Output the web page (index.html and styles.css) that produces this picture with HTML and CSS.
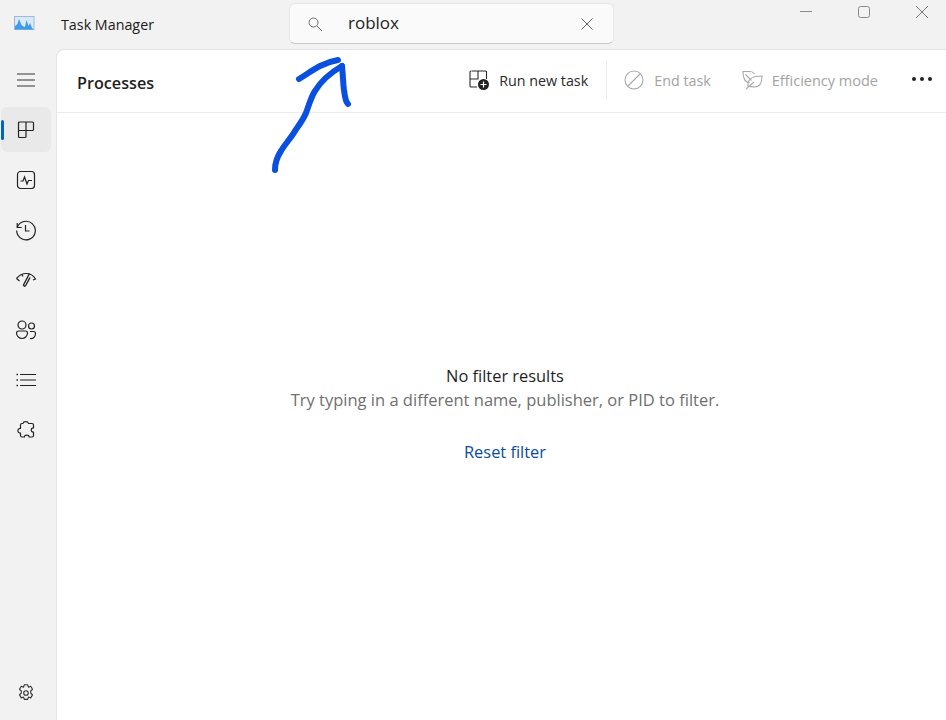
FILE: index.html
```html
<!DOCTYPE html>
<html lang="en">
<head>
<meta charset="utf-8">
<title>Task Manager</title>
<link rel="stylesheet" href="styles.css">
</head>
<body>
<div class="window">
  <header class="titlebar">
    <div class="brand">
      <svg class="app-icon" width="21" height="15" viewBox="0 0 21 15"><rect x=".5" y=".5" width="19.500" height="13" fill="#dbe9f6" stroke="#9cbcdc"/><path d="M1 13.500V10l2.500-2L5 3l2.500 6 2 1.500L11 11l1.500-7 2 6 1.500-3 2 5 2 1.500z" fill="#3f9be8"/></svg>
      <span class="app-name">Task Manager</span>
    </div>
    <div class="search">
      <svg class="search-icon" width="16" height="16" viewBox="0 0 16 16" fill="none" stroke="#6d6d6d" stroke-width="1"><circle cx="6.500" cy="6.500" r="4.500"/><path d="M10 10l5 5"/></svg>
      <span class="search-text">roblox</span>
      <svg class="search-clear" width="14" height="14" viewBox="0 0 14 14" fill="none" stroke="#5f5f5f" stroke-width="1"><path d="M1.500 1.500l11 11M12.500 1.500l-11 11"/></svg>
    </div>
    <div class="win-controls">
      <svg width="12" height="2" viewBox="0 0 12 2"><path d="M0 .5h12" stroke="#8a8a8a"/></svg>
      <svg width="12" height="12" viewBox="0 0 12 12" fill="none"><rect x=".5" y=".5" width="11" height="11" rx="2" stroke="#8a8a8a"/></svg>
      <svg width="12" height="12" viewBox="0 0 12 12" fill="none" stroke="#7a7a7a"><path d="M0 0l12 12M12 0L0 12"/></svg>
    </div>
  </header>
  <div class="body">
    <nav class="sidebar">
      <div class="nav-top">
        <a class="nav-item nav-menu"><svg width="18" height="14" viewBox="0 0 18 14" stroke="#333" stroke-width="1.100"><path d="M0 1h18M0 7h18M0 13h18"/></svg></a>
        <a class="nav-item active"><svg width="20" height="20" viewBox="0 0 20 20" fill="none" stroke="#222" stroke-width="1.200"><path d="M3.500 2h13a1 1 0 0 1 1 1v6.500a1 1 0 0 1-1 1H10v6a1 1 0 0 1-1 1H3.500a1 1 0 0 1-1-1V3a1 1 0 0 1 1-1zM10 2v8.500H2.500"/></svg></a>
        <a class="nav-item"><svg width="20" height="20" viewBox="0 0 20 20" fill="none" stroke="#222" stroke-width="1.200"><rect x="1.500" y="1.500" width="17" height="17" rx="3"/><path d="M4.500 11H7l1.500-4 2.500 7 1.500-3.500H16"/></svg></a>
        <a class="nav-item"><svg width="22" height="22" viewBox="0 0 22 22" fill="none" stroke="#222" stroke-width="1.200"><path d="M2.200 4v4.500h4.500"/><path d="M2.300 8.300A9.300 9.300 0 1 1 1.700 11.500"/><path d="M10.500 6v6h4"/></svg></a>
        <a class="nav-item"><svg width="22" height="16" viewBox="0 0 22 16" fill="none" stroke="#222" stroke-width="1.200"><path d="M1.500 6.500C4 3.500 7.500 1.500 11 1.500c4 0 7.500 2 9.500 5.500l-2.500 1"/><path d="M1.500 6.500l3 2.500M7 2.500l1 2"/><path d="M14.500 1.500l-6 11.500q1 2.500 2.500 0l4-7.500" stroke-width="1.400"/></svg></a>
        <a class="nav-item"><svg width="22" height="20" viewBox="0 0 22 20" fill="none" stroke="#222" stroke-width="1.200"><circle cx="7" cy="5" r="4"/><circle cx="16.500" cy="6" r="3"/><path d="M1.500 13a2 2 0 0 1 2-2h7a2 2 0 0 1 2 2c0 3.500-3 5.500-5.500 5.500S1.500 16.500 1.500 13zM15 18.500c3 .5 5.500-1.500 5.500-5a2 2 0 0 0-2-2H15"/></svg></a>
        <a class="nav-item"><svg width="20" height="14" viewBox="0 0 20 14" fill="none" stroke="#222"><path d="M4 1.500h16M4 7h16M4 12.500h16" stroke-width="1.100"/><path d="M.5 1.500h1.500M.5 7h1.500M.5 12.500h1.500" stroke-width="1.600"/></svg></a>
        <a class="nav-item"><svg width="20" height="20" viewBox="0 0 20 20" fill="none" stroke="#222" stroke-width="1.200"><path d="M7 3.500C7.500 1 12 1 12.500 3.500H16a1.500 1.500 0 0 1 1.500 1.500v3c-3-.5-3 4.500 0 4v3.500a1.500 1.500 0 0 1-1.500 1.500h-3c.5-2.500-5-2.500-4.500 0H6a1.500 1.500 0 0 1-1.500-1.500v-2.500C1 13.500 1 8 4.500 8.500V5A1.500 1.500 0 0 1 6 3.500z" stroke-linejoin="round"/></svg></a>
      </div>
      <a class="nav-item nav-settings"><svg width="20" height="20" viewBox="0 0 20 20" fill="none" stroke="#333" stroke-width="1.100"><circle cx="10" cy="10" r="2.300"/><path d="M8.300 1.800h3.400l.7 2.400 2.300-.9 1.800 3-1.800 1.700.1 2-.1 0 1.800 1.900-1.800 3-2.300-.8-.7 2.300H8.300l-.7-2.300-2.300.8-1.800-3 1.800-1.900V8l-1.800-1.700 1.800-3 2.300.9z" stroke-linejoin="round"/></svg></a>
    </nav>
    <main class="panel">
      <div class="toolbar">
        <h1 class="page-title">Processes</h1>
        <div class="actions">
          <button class="action">
            <svg width="21" height="21" viewBox="0 0 21 21" fill="none"><path d="M2.500 1h14a1 1 0 0 1 1 1v7M9 1v8H1M1 9V2a1 1 0 0 1 1-1M1 9v7a1 1 0 0 0 1 1h6" stroke="#2a2a2a" stroke-width="1.100"/><circle cx="14.500" cy="14.500" r="5.500" fill="#222"/><path d="M14.500 11.500v6M11.500 14.500h6" stroke="#fff" stroke-width="1.200"/></svg>
            <span>Run new task</span>
          </button>
          <span class="divider"></span>
          <button class="action disabled end-task">
            <svg width="20" height="20" viewBox="0 0 20 20" fill="none" stroke="#a9a9a9" stroke-width="1.100"><circle cx="10" cy="10" r="9"/><path d="M4 16L16 4"/></svg>
            <span>End task</span>
          </button>
          <button class="action disabled efficiency">
            <svg width="21" height="20" viewBox="0 0 21 20" fill="none" stroke="#a9a9a9" stroke-width="1.100"><path d="M7.500 12.500C3 12.500 1 8.500 1 1.500h7c2.500 0 3.500 1 4.500 2.500"/><path d="M6 16c-.5-7 4-10 14-10 0 7-2.500 11-7.500 11-2.500 0-4-.5-6.500-1z"/><path d="M4 19l8-7M3.500 4.500l6 6"/></svg>
            <span>Efficiency mode</span>
          </button>
          <button class="more" aria-label="More"><i></i><i></i><i></i></button>
        </div>
      </div>
      <div class="empty">
        <p class="empty-title">No filter results</p>
        <p class="empty-hint">Try typing in a different name, publisher, or PID to filter.</p>
        <a class="reset">Reset filter</a>
      </div>
    </main>
  </div>
  <svg class="scribble" width="946" height="720" viewBox="0 0 946 720" fill="none" stroke="#0a50e0" stroke-width="6" stroke-linecap="round" stroke-linejoin="round"><path d="M275 170c0-6 2-13 6-19 4-7 10-13 14-20 4-6 8-11 11-18 3-8 5-16 9-22 6-10 15-18 27-25"/><path d="M342 66c1 9 1 17 2 24 1 6 1 11 4 14"/><path d="M299 79c7-4 13-9 21-13 6-3 12-5 18-6"/></svg>
</div>
</body>
</html>
```
FILE: styles.css
```css
* { box-sizing: border-box; }
html, body { margin: 0; height: 100%; }
body { font-family: "Open Sans", "Noto Sans", sans-serif; color: #1b1b1b; background: #f2f2f2; overflow: hidden; }
.window { position: relative; display: flex; flex-direction: column; width: 946px; height: 720px; background: #f2f2f2; }

.titlebar { display: flex; align-items: flex-start; height: 49px; flex: none; }
.brand { display: flex; align-items: center; width: 289px; height: 50px; padding-left: 14px; }
.app-icon { flex: none; margin-top: -3px; }
.app-name { margin: 0 0 2px 26px; font-size: 14.300px; }
.search { display: flex; align-items: center; width: 325px; height: 41px; margin-top: 3px; padding: 0 19px 0 17px; background: #fafafa; border: 1px solid #e6e6e6; border-bottom-color: #c9c9c9; border-radius: 6px; }
.search-text { flex: 1; margin-left: 25px; padding-bottom: 2px; font-size: 17px; color: #222; }
.win-controls { display: flex; align-items: center; gap: 46px; margin-left: 186px; height: 24px; }

.body { display: flex; flex: 1; min-height: 0; }
.sidebar { display: flex; flex-direction: column; justify-content: space-between; width: 56px; flex: none; padding-bottom: 2px; }
.nav-top { display: flex; flex-direction: column; }
.nav-item { display: flex; align-items: center; justify-content: center; width: 50px; height: 50px; margin-left: 1px; position: relative; border-radius: 6px; }
.nav-menu { height: 58px; padding-top: 4px; }
.nav-item.active { height: 45px; margin-bottom: 2.500px; background: #e9e9e9; }
.nav-item.active::before { content: ""; position: absolute; left: 0; top: 13px; width: 3px; height: 20px; border-radius: 2px; background: #0067c0; }

.panel { display: flex; flex-direction: column; flex: 1; min-width: 0; background: #fff; border: 1px solid #e5e5e5; border-width: 1px 0 0 1px; border-top-left-radius: 8px; }
.toolbar { display: flex; align-items: center; justify-content: space-between; height: 63px; flex: none; padding: 0 14px 0 20px; border-bottom: 1px solid #ececec; }
.page-title { margin: 4px 0 0; font-size: 16.200px; font-weight: 600; color: #1f1f1f; }
.actions { display: flex; align-items: center; margin-bottom: 2px; }
.action { display: flex; align-items: center; gap: 9px; height: 32px; padding: 0; border: 0; background: none; font: inherit; font-size: 14.300px; color: #2a2a2a; }
.action.disabled { color: #a3a3a3; }
.end-task { gap: 10px; margin-right: 31px; }
.efficiency { margin-right: 34px; font-size: 14.500px; }
.divider { width: 1px; height: 38px; margin: 0 17px 0 18px; background: #ededed; }
.more { display: flex; gap: 4px; padding: 0; border: 0; background: none; margin-bottom: 2px; }
.more i { width: 4px; height: 4px; border-radius: 50%; background: #222; }

.empty { display: flex; flex-direction: column; align-items: center; flex: 1; padding: 251px 0 0 7px; }
.empty p { margin: 0; }
.empty-title { font-size: 16.400px; line-height: 24px; color: #1f1f1f; }
.empty-hint { font-size: 16.500px; line-height: 24px; color: #6f6f6f; }
.reset { margin-top: 28px; font-size: 16.400px; line-height: 24px; color: #0a4d9c; }

.scribble { position: absolute; left: 0; top: 0; pointer-events: none; }
```
